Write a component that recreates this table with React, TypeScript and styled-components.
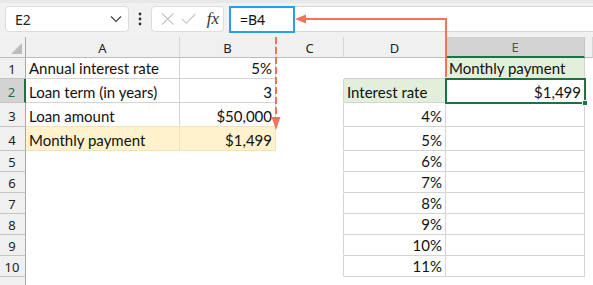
import React from 'react';
import styled, { createGlobalStyle } from 'styled-components';

const GlobalStyle = createGlobalStyle`
  html, body {
    margin: 0;
    padding: 0;
    background: #fff;
  }
  * {
    box-sizing: border-box;
  }
`;

const GREEN = '#1e7145';
const GRID = '#d4d4d4';
const ARROW = '#f2735b';

const Frame = styled.div`
  position: relative;
  width: 593px;
  height: 285px;
  overflow: hidden;
  background: #fff;
`;

/* formula bar */
const TopBar = styled.div`
  height: 37px;
  background: #f1f1f1;
  border-top: 3px solid #e8e8e8;
  display: flex;
  align-items: flex-start;
  padding: 3px 0 0 5px;
`;

const NameBox = styled.div`
  width: 124px;
  height: 26px;
  background: #fff;
  border: 1px solid #dcdcdc;
  border-radius: 4px;
  display: flex;
  align-items: center;
  justify-content: space-between;
  padding: 0 6px 0 9px;
  font-family: 'Noto Sans', 'Open Sans', sans-serif;
  font-size: 14px;
  color: #222;
`;

const Dots = styled.div`
  width: 22px;
  display: flex;
  justify-content: center;
  align-items: center;
  height: 26px;
`;

const FxBox = styled.div`
  width: 73px;
  height: 26px;
  background: #fff;
  border: 1px solid #dcdcdc;
  border-radius: 4px;
  display: flex;
  align-items: center;
  padding: 0 4px 0 9px;
  gap: 7px;
`;

const FxText = styled.span`
  font-family: 'Liberation Serif', serif;
  font-style: italic;
  font-size: 17px;
  color: #333;
  margin-left: 3px;
`;

const FormulaField = styled.div`
  flex: 1;
  margin-left: 5px;
  height: 26px;
  background: #fff;
  border-top: 1px solid #d6d6d6;
  border-bottom: 1px solid #d6d6d6;
  display: flex;
`;

const EditBox = styled.div`
  width: 66px;
  height: 27px;
  margin-top: -1px;
  border: 2px solid #2b9ee8;
  display: flex;
  align-items: center;
  padding-left: 9px;
  font-family: 'Noto Sans', 'Open Sans', sans-serif;
  font-size: 14px;
  color: #111;
`;

/* sheet */
const Sheet = styled.div`
  display: grid;
  grid-template-columns: 26px 154px 96px 68px 102px 139px 1fr;
  grid-template-rows: 21px 21px 24px 24px 24px repeat(6, 21px) 21px;
`;

const ColHead = styled.div<{ $active?: boolean }>`
  background: ${(p) => (p.$active ? '#d3d3d3' : '#f0f0f0')};
  color: ${(p) => (p.$active ? GREEN : '#222')};
  border-right: 1px solid ${(p) => (p.$active ? '#c4c4c4' : '#d6d6d6')};
  border-bottom: ${(p) => (p.$active ? `2px solid ${GREEN}` : '1px solid #bdbdbd')};
  font-family: 'Noto Sans', 'Open Sans', sans-serif;
  font-size: 13px;
  display: flex;
  align-items: center;
  justify-content: center;
  padding-top: 1px;
`;

const Corner = styled.div`
  background: #f0f0f0;
  border-right: 1px solid #a8a8a8;
  border-bottom: 1px solid #bdbdbd;
  display: flex;
  align-items: flex-end;
  justify-content: flex-end;
  padding: 0 3px 3px 0;
`;

const RowHead = styled.div<{ $active?: boolean }>`
  background: ${(p) => (p.$active ? '#d3d3d3' : '#f0f0f0')};
  color: ${(p) => (p.$active ? GREEN : '#222')};
  border-right: ${(p) => (p.$active ? `2px solid ${GREEN}` : '1px solid #a8a8a8')};
  border-bottom: 1px solid #c4c4c4;
  font-family: 'Noto Sans', 'Open Sans', sans-serif;
  font-size: 13px;
  display: flex;
  align-items: center;
  justify-content: center;
  padding: 2px 1px 0 0;
`;

const Cell = styled.div<{
  $align?: 'left' | 'right';
  $bg?: string;
  $br?: string;
  $bb?: string;
  $selected?: boolean;
}>`
  position: relative;
  background: ${(p) => p.$bg || '#fff'};
  border-right: 1px solid ${(p) => p.$br || 'transparent'};
  border-bottom: 1px solid ${(p) => p.$bb || 'transparent'};
  display: flex;
  align-items: flex-end;
  justify-content: ${(p) => (p.$align === 'right' ? 'flex-end' : 'flex-start')};
  padding: 0 3px 1px 3px;
  font-family: 'Lato', 'Liberation Sans', sans-serif;
  font-size: 15px;
  color: #111;
  white-space: nowrap;
  ${(p) =>
    p.$selected &&
    `
    outline: 2px solid ${GREEN};
    outline-offset: -1px;
    z-index: 1;
  `}
`;

const FillHandle = styled.span`
  position: absolute;
  right: -4px;
  bottom: -4px;
  width: 6px;
  height: 6px;
  background: ${GREEN};
  border: 1px solid #fff;
`;

const Overlay = styled.svg`
  position: absolute;
  left: 0;
  top: 0;
  pointer-events: none;
  z-index: 5;
`;

const GOLD = '#fff2cc';
const GOLD_LINE = '#f2e2b5';
const MINT = '#e2efda';

type Spec = {
  text?: string;
  align?: 'left' | 'right';
  bg?: string;
  br?: string;
  bb?: string;
  selected?: boolean;
};

const blank: Spec = {};

const rows: { h: string; active?: boolean; cells: Spec[] }[] = [
  {
    h: '1',
    cells: [
      { text: 'Annual interest rate', br: GRID, bb: GRID },
      { text: '5%', align: 'right', br: GRID, bb: GRID },
      blank,
      { bb: GRID },
      { text: 'Monthly payment', bg: MINT, br: GRID },
      blank,
    ],
  },
  {
    h: '2',
    active: true,
    cells: [
      { text: 'Loan term (in years)', br: GRID, bb: GRID },
      { text: '3', align: 'right', br: GRID, bb: GRID },
      { br: GRID },
      { text: 'Interest rate', bg: MINT, br: GRID, bb: GRID },
      { text: '$1,499', align: 'right', br: GRID, bb: GRID, selected: true },
      blank,
    ],
  },
  {
    h: '3',
    cells: [
      { text: 'Loan amount', br: GRID, bb: GOLD_LINE },
      { text: '$50,000', align: 'right', br: GRID, bb: GOLD_LINE },
      { br: GRID },
      { text: '4%', align: 'right', br: GRID, bb: GRID },
      { br: GRID, bb: GRID },
      blank,
    ],
  },
  {
    h: '4',
    cells: [
      { text: 'Monthly payment', bg: GOLD, br: GOLD_LINE, bb: GOLD_LINE },
      { text: '$1,499', align: 'right', bg: GOLD, br: GOLD_LINE, bb: GOLD_LINE },
      { br: GRID },
      { text: '5%', align: 'right', br: GRID, bb: GRID },
      { br: GRID, bb: GRID },
      blank,
    ],
  },
  ...['6%', '7%', '8%', '9%', '10%', '11%'].map((v, i) => ({
    h: String(i + 5),
    cells: [
      blank,
      blank,
      { br: GRID },
      { text: v, align: 'right' as const, br: GRID, bb: GRID },
      { br: GRID, bb: GRID },
      blank,
    ],
  })),
  // row 11 is only a sliver at the bottom edge
  { h: '', cells: [blank, blank, blank, blank, blank, blank] },
];

const cols = ['A', 'B', 'C', 'D', 'E', ''];

const ChevronDown = () => (
  <svg width="12" height="8" viewBox="0 0 12 8">
    <path d="M1 1.5 L6 6.5 L11 1.5" fill="none" stroke="#444" strokeWidth="1.2" />
  </svg>
);

const VDots = () => (
  <svg width="4" height="14" viewBox="0 0 4 14">
    <circle cx="2" cy="2" r="1.4" fill="#333" />
    <circle cx="2" cy="7" r="1.4" fill="#333" />
    <circle cx="2" cy="12" r="1.4" fill="#333" />
  </svg>
);

const Cross = () => (
  <svg width="14" height="14" viewBox="0 0 14 14">
    <path d="M1 1 L13 13 M13 1 L1 13" stroke="#bdbdbd" strokeWidth="1.1" />
  </svg>
);

const Check = () => (
  <svg width="16" height="12" viewBox="0 0 16 12">
    <path d="M1 6 L5.5 10.5 L15 1" fill="none" stroke="#bdbdbd" strokeWidth="1.1" />
  </svg>
);

const CornerMark = () => (
  <svg width="11" height="11" viewBox="0 0 11 11">
    <polygon points="11,0 11,11 0,11" fill="#bcbcbc" />
  </svg>
);

export default function App() {
  return (
    <Frame>
      <GlobalStyle />
      <TopBar>
        <NameBox>
          <span>E2</span>
          <ChevronDown />
        </NameBox>
        <Dots>
          <VDots />
        </Dots>
        <FxBox>
          <Cross />
          <Check />
          <FxText>fx</FxText>
        </FxBox>
        <FormulaField>
          <EditBox>=B4</EditBox>
        </FormulaField>
      </TopBar>
      <Sheet>
        <Corner>
          <CornerMark />
        </Corner>
        {cols.map((c, i) => (
          <ColHead key={i} $active={c === 'E'}>
            {c}
          </ColHead>
        ))}
        {rows.map((r, i) => (
          <React.Fragment key={i}>
            <RowHead $active={r.active}>{r.h}</RowHead>
            {r.cells.map((c, j) => (
              <Cell
                key={j}
                $align={c.align}
                $bg={c.bg}
                $br={c.br}
                $bb={c.bb}
                $selected={c.selected}
              >
                {c.text}
                {c.selected && <FillHandle />}
              </Cell>
            ))}
          </React.Fragment>
        ))}
      </Sheet>
      <Overlay width="593" height="285" viewBox="0 0 593 285">
        <polyline
          points="446,77 446,19 304,19"
          fill="none"
          stroke={ARROW}
          strokeWidth="2"
        />
        <polygon points="295,19 306,14.5 306,23.5" fill={ARROW} />
        <line
          x1="276"
          y1="37"
          x2="276"
          y2="118"
          stroke={ARROW}
          strokeWidth="2"
          strokeDasharray="7 3"
        />
        <polygon points="271.5,117 280.5,117 276,130" fill={ARROW} />
      </Overlay>
    </Frame>
  );
}
